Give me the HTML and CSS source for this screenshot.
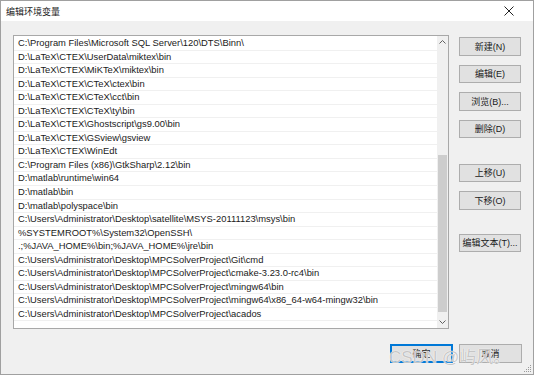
FILE: index.html
```html
<!DOCTYPE html>
<html lang="zh-CN">
<head>
<meta charset="utf-8">
<title>编辑环境变量</title>
<link rel="stylesheet" href="styles.css">
</head>
<body>
<div class="window">
  <div class="titlebar">
    <span class="title">编辑环境变量</span>
    <svg class="close" width="10" height="10" viewBox="0 0 10 10"><path d="M0.5 0.5L9.5 9.5M9.5 0.5L0.5 9.5" stroke="#222" stroke-width="1" fill="none"/></svg>
  </div>
  <div class="content">
    <div class="list">
      <ul class="rows">
        <li>C:\Program Files\Microsoft SQL Server\120\DTS\Binn\</li>
        <li>D:\LaTeX\CTEX\UserData\miktex\bin</li>
        <li>D:\LaTeX\CTEX\MiKTeX\miktex\bin</li>
        <li>D:\LaTeX\CTEX\CTeX\ctex\bin</li>
        <li>D:\LaTeX\CTEX\CTeX\cct\bin</li>
        <li>D:\LaTeX\CTEX\CTeX\ty\bin</li>
        <li>D:\LaTeX\CTEX\Ghostscript\gs9.00\bin</li>
        <li>D:\LaTeX\CTEX\GSview\gsview</li>
        <li>D:\LaTeX\CTEX\WinEdt</li>
        <li>C:\Program Files (x86)\GtkSharp\2.12\bin</li>
        <li>D:\matlab\runtime\win64</li>
        <li>D:\matlab\bin</li>
        <li>D:\matlab\polyspace\bin</li>
        <li>C:\Users\Administrator\Desktop\satellite\MSYS-20111123\msys\bin</li>
        <li>%SYSTEMROOT%\System32\OpenSSH\</li>
        <li>.;%JAVA_HOME%\bin;%JAVA_HOME%\jre\bin</li>
        <li>C:\Users\Administrator\Desktop\MPCSolverProject\Git\cmd</li>
        <li>C:\Users\Administrator\Desktop\MPCSolverProject\cmake-3.23.0-rc4\bin</li>
        <li>C:\Users\Administrator\Desktop\MPCSolverProject\mingw64\bin</li>
        <li>C:\Users\Administrator\Desktop\MPCSolverProject\mingw64\x86_64-w64-mingw32\bin</li>
        <li>C:\Users\Administrator\Desktop\MPCSolverProject\acados</li>
      </ul>
      <div class="scrollbar">
        <div class="arrow"><svg width="7" height="4" viewBox="0 0 7 4"><path d="M0.5 3.5L3.5 0.5L6.5 3.5" stroke="#606060" fill="none"/></svg></div>
        <div class="track"><div class="thumb"></div></div>
        <div class="arrow"><svg width="7" height="4" viewBox="0 0 7 4"><path d="M0.5 0.5L3.5 3.5L6.5 0.5" stroke="#606060" fill="none"/></svg></div>
      </div>
    </div>
    <div class="buttons">
      <button class="btn">新建(N)</button>
      <button class="btn">编辑(E)</button>
      <button class="btn">浏览(B)...</button>
      <button class="btn">删除(D)</button>
      <button class="btn gap1">上移(U)</button>
      <button class="btn">下移(O)</button>
      <button class="btn gap2">编辑文本(T)...</button>
    </div>
  </div>
  <div class="footer">
    <button class="btn primary">确定</button>
    <button class="btn">取消</button>
  </div>
  <svg class="grip" width="9" height="9" viewBox="0 0 9 9"><g fill="#9a9a9a"><rect x="7" y="1" width="1" height="1"/><rect x="5" y="3" width="1" height="1"/><rect x="7" y="3" width="1" height="1"/><rect x="3" y="5" width="1" height="1"/><rect x="5" y="5" width="1" height="1"/><rect x="7" y="5" width="1" height="1"/><rect x="1" y="7" width="1" height="1"/><rect x="3" y="7" width="1" height="1"/><rect x="5" y="7" width="1" height="1"/><rect x="7" y="7" width="1" height="1"/></g></svg>
  <div class="watermark">CSDN @屿风。</div>
</div>
</body>
</html>
```
FILE: styles.css
```css
html, body {
  margin: 0;
  padding: 0;
  background: #ffffff;
}
.window {
  position: relative;
  width: 534px;
  height: 375px;
  box-sizing: border-box;
  border: 1px solid #a0a0a0;
  background: #f0f0f0;
  display: flex;
  flex-direction: column;
  font-family: "Liberation Sans", "Noto Sans CJK SC", sans-serif;
  font-size: 9.4px;
  color: #000;
  overflow: hidden;
}
.titlebar {
  height: 20px;
  background: #ffffff;
  display: flex;
  align-items: center;
  justify-content: space-between;
  padding: 0 19px 0 5px;
  flex: none;
}
.title {
  font-family: "Noto Sans CJK SC", sans-serif;
  font-size: 9px;
  color: #1a1a1a;
}
.close {
  display: block;
}
.content {
  display: flex;
  padding: 14px 0 0 12px;
  gap: 10px;
}
.list {
  width: 436px;
  height: 294px;
  box-sizing: border-box;
  border: 1px solid #a8a8a8;
  background: #ffffff;
  display: flex;
}
.rows {
  list-style: none;
  margin: 0;
  padding: 1px 0 0 0;
  flex: 1;
  overflow: hidden;
}
.rows li {
  height: 13.55px;
  box-sizing: border-box;
  border-bottom: 1px solid #f0f0f0;
  padding-left: 4px;
  line-height: 12.5px;
  white-space: nowrap;
  color: #1a1a1a;
}
.scrollbar {
  width: 11px;
  background: #f0f0f0;
  display: flex;
  flex-direction: column;
}
.arrow {
  height: 12px;
  display: flex;
  align-items: center;
  justify-content: center;
  flex: none;
}
.track {
  flex: 1;
  display: flex;
  flex-direction: column;
  justify-content: flex-end;
  padding: 0 1px 4px;
}
.thumb {
  height: 157px;
  background: #cdcdcd;
}
.buttons {
  display: flex;
  flex-direction: column;
  padding-top: 2px;
  gap: 9px;
}
.btn {
  width: 62px;
  height: 18.5px;
  box-sizing: border-box;
  border: 1px solid #adadad;
  background: #e1e1e1;
  font-family: "Liberation Sans", "Noto Sans CJK SC", sans-serif;
  font-size: 9px;
  color: #1a1a1a;
  padding: 0;
  margin: 0;
}
.buttons .gap1 {
  margin-top: 16.5px;
}
.buttons .gap2 {
  margin-top: 15px;
}
.footer {
  display: flex;
  justify-content: flex-end;
  gap: 6px;
  padding: 15px 11px 0 0;
}
.footer .btn {
  width: 63px;
  height: 19px;
}
.btn.primary {
  border: 1px solid #0078d7;
  box-shadow: inset 0 0 0 1px #0078d7;
}
.grip {
  position: absolute;
  right: 1px;
  bottom: 1px;
}
.watermark {
  position: absolute;
  left: 388px;
  top: 342px;
  font-family: "Liberation Sans", "Noto Sans CJK SC", sans-serif;
  font-size: 17px;
  color: rgba(150, 150, 150, 0.55);
  text-shadow: 0 0 1px #ffffff, 0 0 1px #ffffff;
  white-space: nowrap;
}
```
